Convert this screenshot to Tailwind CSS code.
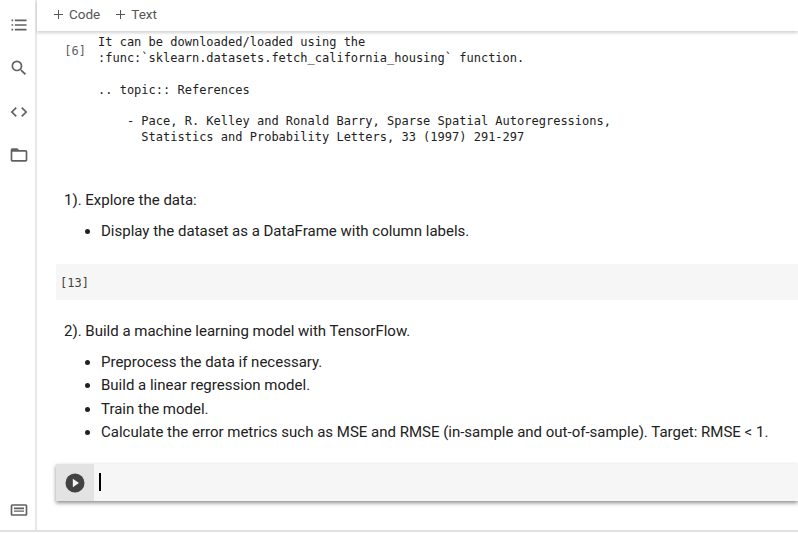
<!DOCTYPE html>
<html lang="en">
<head>
    <meta charset="UTF-8">
    <meta name="viewport" content="width=device-width, initial-scale=1.0">
    <title>Notebook</title>
    <script src="https://cdn.jsdelivr.net/npm/@tailwindcss/browser@4"></script>
</head>
<body class="bg-white overflow-hidden font-['Roboto',sans-serif]">
    <div class="w-[798px] h-[534px] flex flex-col overflow-hidden">
        <div class="h-[530px] flex border-b-2 border-[#e0e0e0] box-content">
            <!-- sidebar -->
            <aside class="w-[37px] shrink-0 border-r-2 border-[#e8e8e8] flex flex-col items-center pl-[3px] text-[#616161]">
                <svg class="mt-[15px]" width="20" height="20" viewBox="0 0 24 24" fill="currentColor"><path d="M3 5.5h2v2H3zM7 5.5h14v2H7zM3 11h2v2H3zM7 11h14v2H7zM3 16.5h2v2H3zM7 16.5h14v2H7z"/></svg>
                <svg class="mt-[23px]" width="20" height="20" viewBox="0 0 24 24" fill="currentColor"><path d="M15.5 14h-.79l-.28-.27A6.47 6.47 0 0 0 16 9.5 6.5 6.5 0 1 0 9.5 16c1.61 0 3.09-.59 4.23-1.57l.27.28v.79l5 4.99L20.49 19l-4.99-5zm-6 0C7.01 14 5 11.99 5 9.5S7.01 5 9.5 5 14 7.01 14 9.5 11.99 14 9.5 14z"/></svg>
                <svg class="mt-[24px]" width="20" height="20" viewBox="0 0 24 24" fill="currentColor"><path d="M9.4 16.6 4.8 12l4.6-4.6L8 6l-6 6 6 6 1.4-1.4zm5.2 0 4.6-4.6-4.6-4.6L16 6l6 6-6 6-1.4-1.4z"/></svg>
                <svg class="mt-[23px]" width="20" height="20" viewBox="0 0 24 24" fill="currentColor"><path d="M20 6h-8l-2-2H4c-1.1 0-2 .9-2 2v12c0 1.1.9 2 2 2h16c1.1 0 2-.9 2-2V8c0-1.1-.9-2-2-2zm0 12H4V8h16v10z"/></svg>
                <svg class="mt-auto mb-[10px]" width="20" height="20" viewBox="0 0 24 24" fill="currentColor"><path d="M20 5H4c-1.1 0-2 .9-2 2v10c0 1.1.9 2 2 2h16c1.1 0 2-.9 2-2V7c0-1.1-.9-2-2-2zm0 12H4V7h16v10zM6 9h12v2H6zm0 3.5h12v1.5H6z"/></svg>
            </aside>

            <main class="flex-1 min-w-0 flex flex-col">
                <!-- toolbar -->
                <div class="relative z-10 h-[31px] shrink-0 flex items-center gap-[15px] pl-[16px] pb-[2px] text-[13.5px] text-[#555] shadow-[0_2px_3px_rgba(0,0,0,0.18)]">
                    <span class="flex items-center gap-[5px]"><svg width="11" height="11" viewBox="0 0 11 11" stroke="currentColor" fill="none"><path d="M5.5 1v9M1 5.5h9"/></svg>Code</span>
                    <span class="flex items-center gap-[5px]"><svg width="11" height="11" viewBox="0 0 11 11" stroke="currentColor" fill="none"><path d="M5.5 1v9M1 5.5h9"/></svg>Text</span>
                </div>

                <!-- output cell -->
                <div class="flex h-[145px] shrink-0 font-['DejaVu_Sans_Mono',monospace] text-[12px] leading-[15.85px] text-[#212121]">
                    <div class="w-[61px] shrink-0 text-right text-[#616161] pt-[13px] pr-[12px]">[6]</div>
                    <pre class="font-['DejaVu_Sans_Mono',monospace] pt-[4px]">It can be downloaded/loaded using the
:func:`sklearn.datasets.fetch_california_housing` function.

.. topic:: References

    - Pace, R. Kelley and Ronald Barry, Sparse Spatial Autoregressions,
      Statistics and Probability Letters, 33 (1997) 291-297</pre>
                </div>

                <!-- text cell 1 -->
                <div class="pl-[27px] h-[88px] shrink-0 text-[15px] leading-[24px] text-[#212121]">
                    <p class="pt-[12px]">1). Explore the data:</p>
                    <ul class="list-disc pl-[37px] mt-[7px]">
                        <li>Display the dataset as a DataFrame with column labels.</li>
                    </ul>
                </div>

                <!-- empty code cell -->
                <div class="ml-[19px] h-[36px] shrink-0 bg-[#f6f6f6] flex items-center pl-[4px] pt-[2px] font-['DejaVu_Sans_Mono',monospace] text-[12px] text-[#424242]">[13]</div>

                <!-- text cell 2 -->
                <div class="pl-[27px] h-[164px] shrink-0 text-[15px] leading-[23.6px] text-[#212121]">
                    <p class="pt-[20px]">2). Build a machine learning model with TensorFlow.</p>
                    <ul class="list-disc pl-[37px] mt-[7px]">
                        <li>Preprocess the data if necessary.</li>
                        <li>Build a linear regression model.</li>
                        <li>Train the model.</li>
                        <li>Calculate the error metrics such as MSE and RMSE (in-sample and out-of-sample). Target: RMSE &lt; 1.</li>
                    </ul>
                </div>

                <!-- focused cell -->
                <div class="ml-[19px] h-[37px] shrink-0 flex bg-[#f6f6f6] shadow-[0_2px_4px_rgba(0,0,0,0.45)]">
                    <div class="w-[38px] bg-[#e3e3e3] flex items-center justify-center">
                        <svg width="20" height="20" viewBox="0 0 20 20"><circle cx="10" cy="10" r="9.5" fill="#424242"/><path d="M7.8 5.8 14 10l-6.2 4.2z" fill="#f6f6f6"/></svg>
                    </div>
                    <div class="ml-[5px] mt-[9px] w-[2px] h-[18px] bg-black"></div>
                </div>
            </main>
        </div>
    </div>
</body>
</html>
